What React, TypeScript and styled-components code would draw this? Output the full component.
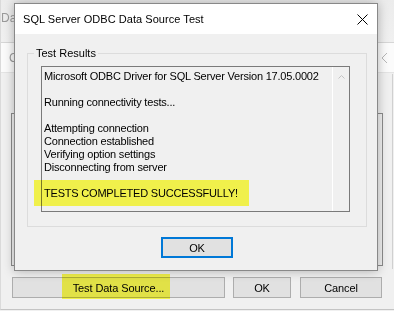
import styled, { createGlobalStyle } from 'styled-components';

const GlobalStyle = createGlobalStyle`
    html, body { margin:0;padding:0;background:#f0f0f0; }
    body { font-family:"Liberation Sans", Arial, sans-serif;font-size:11px;color:#000; }
`;

const resultLines = [
    'Microsoft ODBC Driver for SQL Server Version 17.05.0002',
    '',
    'Running connectivity tests...',
    '',
    'Attempting connection',
    'Connection established',
    'Verifying option settings',
    'Disconnecting from server',
    '',
    'TESTS COMPLETED SUCCESSFULLY!',
];

const App = () => {
    return <Screen>
        <GlobalStyle />
        <BackWindow>
            <BackTop><FadedText>Dat</FadedText></BackTop>
            <BackTabRow>
                <FadedText>C</FadedText>
                <Chevron viewBox="0 0 8 12" width="8" height="12">
                    <path d="M7 1 L2 6 L7 11" fill="none" stroke="#b8b8b8" strokeWidth="1" />
                </Chevron>
            </BackTabRow>
            <BackFrame />
            <BackButtons>
                <WinButton $width={213}>Test Data Source...</WinButton>
                <WinButton $width={58}>OK</WinButton>
                <WinButton $width={82}>Cancel</WinButton>
            </BackButtons>
        </BackWindow>

        <Dialog>
            <TitleBar>
                <TitleText>SQL Server ODBC Data Source Test</TitleText>
                <CloseIcon viewBox="0 0 11 11" width="11" height="11">
                    <path d="M0.5 0.5 L10.5 10.5 M10.5 0.5 L0.5 10.5" stroke="#000" strokeWidth="1" />
                </CloseIcon>
            </TitleBar>
            <DialogBody>
                <GroupBox>
                    <GroupLabel>Test Results</GroupLabel>
                    <ResultBox>
                        <ResultText>
                            {resultLines.map((line, i) => <Line key={i}>{line || '\u00a0'}</Line>)}
                        </ResultText>
                        <ScrollTrack>
                            <svg viewBox="0 0 7 4" width="7" height="4">
                                <path d="M0.5 3.5 L3.5 0.5 L6.5 3.5" fill="none" stroke="#c4c4c4" strokeWidth="1" />
                            </svg>
                        </ScrollTrack>
                    </ResultBox>
                </GroupBox>
                <DialogFooter>
                    <WinButton $width={72} $default>OK</WinButton>
                </DialogFooter>
            </DialogBody>
        </Dialog>

        <Highlight style={{ left: 34, top: 180, width: 215, height: 26 }} />
        <Highlight style={{ left: 62, top: 274, width: 108, height: 25 }} />
    </Screen>
}

const Screen = styled.div`
    position:relative;width:394px;height:311px;overflow:hidden;background:#f0f0f0;
`

const BackWindow = styled.div`
    display:flex;flex-direction:column;height:310px;box-sizing:border-box;
    border-left:1px solid #dadada;border-bottom:1px solid #c4c4c4;
`

const BackTop = styled.div`
    height:42px;display:flex;align-items:center;padding-bottom:6px;box-sizing:border-box;
    background:linear-gradient(180deg,#ececec,#f0f0f0);
`

const FadedText = styled.span`
    color:#9a9a9a;font-size:12px;
`

const BackTabRow = styled.div`
    height:31px;display:flex;align-items:center;justify-content:space-between;
    padding:0 6px 0 8px;box-sizing:border-box;
    background:#fbfbfb;border-top:1px solid #d6d6d6;border-bottom:1px solid #e4e4e4;
`

const Chevron = styled.svg`
    display:block;
`

const BackFrame = styled.div`
    position:relative;margin:40px 11px 0 10px;height:151px;border:1px solid #8c8c8c;
    &::after {
        content:'';position:absolute;right:-11px;top:-40px;bottom:-4px;border-left:1px solid #d0d0d0;
    }
`

const BackButtons = styled.div`
    display:flex;gap:8px;margin:11px 0 0 11px;
    & > :nth-child(3) { margin-left:1px; }
`

const WinButton = styled.div<{ $width: number; $default?: boolean }>`
    width:${({ $width }) => $width}px;height:21px;box-sizing:border-box;
    display:flex;align-items:center;justify-content:center;
    background:#e1e1e1;border:${({ $default }) => $default ? '2px solid #0078d7' : '1px solid #adadad'};
    font-size:11px;letter-spacing:-0.1px;color:#000;
`

const Dialog = styled.div`
    position:absolute;left:14px;top:3px;width:364px;height:268px;box-sizing:border-box;
    display:flex;flex-direction:column;background:#f0f0f0;
    border:1px solid #888;box-shadow:0 0 10px rgba(0,0,0,.28);
`

const TitleBar = styled.div`
    height:30px;flex:none;display:flex;align-items:center;justify-content:space-between;
    padding:0 9px 0 8px;background:#fff;
`

const TitleText = styled.span`
    font-size:11px;letter-spacing:0.05px;
`

const CloseIcon = styled.svg`
    display:block;
`

const DialogBody = styled.div`
    flex:1;display:flex;flex-direction:column;padding:19px 10px 0 12px;
`

const GroupBox = styled.div`
    position:relative;height:174px;box-sizing:border-box;
    border:1px solid #dcdcdc;padding:12px 16px 0 13px;
`

const GroupLabel = styled.span`
    position:absolute;left:6px;top:-7px;padding:0 2px;background:#f0f0f0;font-size:11px;
`

const ResultBox = styled.div`
    height:146px;box-sizing:border-box;display:flex;
    border:1px solid #7a7a7a;background:#f0f0f0;
`

const ResultText = styled.div`
    flex:1;padding:3px 2px;letter-spacing:-0.2px;
`

const Line = styled.div`
    height:13px;line-height:13px;white-space:nowrap;
`

const ScrollTrack = styled.div`
    width:17px;flex:none;display:flex;justify-content:center;padding-top:8px;box-sizing:border-box;
    border-left:1px solid #fff;
    svg { display:block; }
`

const DialogFooter = styled.div`
    display:flex;justify-content:center;padding-top:10px;
`

const Highlight = styled.div`
    position:absolute;background:rgb(255,255,80);mix-blend-mode:multiply;pointer-events:none;
`

export default App;
